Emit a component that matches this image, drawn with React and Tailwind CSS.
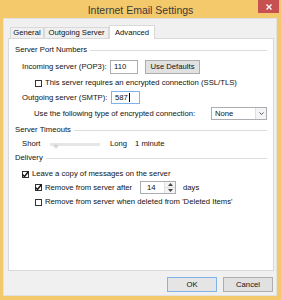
import { useState } from "react";

function Section({ title, className }) {
  return (
    <div className={"flex items-center h-[10px] " + className}>
      <span>{title}</span>
      <div className="flex-1 h-px bg-[#dcdcdc] ml-[3px]" />
    </div>
  );
}

function Check({ checked }) {
  return (
    <span className="w-[7px] h-[7px] border border-[#333] bg-white flex items-center justify-center shrink-0">
      {checked && (
        <svg width="7" height="7" viewBox="0 0 7 7" className="overflow-visible">
          <polyline points="0.5,3.5 2.5,5.5 6.5,0.5" fill="none" stroke="#111" strokeWidth="1.4" />
        </svg>
      )}
    </span>
  );
}

function Tab({ label, active, w }) {
  if (active) {
    return (
      <div className={"h-[14px] -mb-px bg-white border border-b-0 border-[#d9d9d9] flex items-center justify-center z-10 " + w}>
        {label}
      </div>
    );
  }
  return (
    <div className={"h-[11px] mt-[3px] bg-[#f0f0f0] border border-b-0 border-[#d9d9d9] flex items-center justify-center " + w}>
      {label}
    </div>
  );
}

export default function App() {
  const [leave] = useState(true);

  return (
    <div className="w-[281px] h-[300px] bg-[#f3c96c] flex flex-col text-[7.7px] text-[#111] leading-none whitespace-nowrap" style={{ fontFamily: '"Liberation Sans", Arial, sans-serif' }}>
      <div className="h-[18px] grid grid-cols-[1fr_auto_1fr] items-start">
        <div />
        <div className="text-[10.5px] text-[#3a3a3a] mt-[5px]">Internet Email Settings</div>
        <div className="flex justify-end">
          <div className="w-[21px] h-[13px] bg-[#c75050] mr-[2px] flex items-center justify-center">
            <svg width="6" height="6" viewBox="0 0 6 6">
              <path d="M0.5 0.5 L5.5 5.5 M5.5 0.5 L0.5 5.5" stroke="#fff" strokeWidth="1.4" />
            </svg>
          </div>
        </div>
      </div>

      <div className="flex-1 ml-[3px] mr-[4px] mb-[4px] bg-[#f0f0f0] border border-[#e2e2e2] flex flex-col pl-[4px] pr-[2px] pt-[5px]">
        <div className="flex items-end pl-[2px] h-[14px]">
          <Tab label="General" w="w-[34px]" />
          <Tab label="Outgoing Server" w="w-[65px]" />
          <Tab label="Advanced" active w="w-[46px]" />
        </div>
        <div className="h-[233px] bg-white border border-[#d9d9d9] px-[6px] flex flex-col">
          <Section title="Server Port Numbers" className="mt-[6px]" />

          <div className="h-[14px] mt-[5px] flex items-center pl-[7px]">
            <span className="w-[88px] shrink-0">Incoming server (POP3):</span>
            <div className="w-[28px] h-[14px] border border-[#abadb3] bg-white flex items-center pl-[3px]">110</div>
            <div className="w-[55px] h-[14px] ml-[7px] border border-[#adadad] bg-[#e1e1e1] flex items-center justify-center">Use Defaults</div>
          </div>

          <div className="h-[8px] mt-[5px] flex items-center pl-[20px] gap-[3px]">
            <Check />
            <span>This server requires an encrypted connection (SSL/TLS)</span>
          </div>

          <div className="h-[13px] mt-[4px] flex items-center pl-[7px]">
            <span className="w-[89px] shrink-0">Outgoing server (SMTP):</span>
            <div className="w-[29px] h-[13px] border border-[#7eb4ea] bg-white flex items-center pl-[3px]">
              587<span className="w-px h-[9px] bg-black ml-px" />
            </div>
          </div>

          <div className="h-[13px] mt-[3px] flex items-center pl-[19px]">
            <span className="w-[177px] shrink-0">Use the following type of encrypted connection:</span>
            <div className="w-[56px] h-[13px] border border-[#abadb3] bg-white flex items-center">
              <span className="flex-1 pl-[3px]">None</span>
              <div className="w-[11px] h-[11px] border-l border-[#e0e0e0] bg-[#f4f4f4] flex items-center justify-center">
                <svg width="5" height="3" viewBox="0 0 5 3">
                  <polyline points="0.5,0.5 2.5,2.5 4.5,0.5" fill="none" stroke="#555" strokeWidth="1" />
                </svg>
              </div>
            </div>
          </div>

          <Section title="Server Timeouts" className="mt-[5px]" />

          <div className="h-[10px] mt-[4px] flex items-center pl-[7px]">
            <span className="w-[28px]">Short</span>
            <div className="w-[50px] h-[3px] bg-[#e6e6e6] relative">
              <div className="absolute left-[4px] top-[1px] w-[4px] h-[4px] bg-[#d8d8d8] rotate-45" />
            </div>
            <span className="ml-[10px] w-[25px]">Long</span>
            <span>1 minute</span>
          </div>

          <Section title="Delivery" className="mt-[4px]" />

          <div className="h-[8px] mt-[7px] flex items-center pl-[7px] gap-[3px]">
            <Check checked={leave} />
            <span>Leave a copy of messages on the server</span>
          </div>

          <div className="h-[13px] mt-[3px] flex items-center pl-[20px]">
            <Check checked />
            <span className="ml-[3px] w-[95px] shrink-0">Remove from server after</span>
            <div className="w-[36px] h-[13px] border border-[#abadb3] bg-white flex items-center">
              <span className="flex-1 pl-[6px]">14</span>
              <div className="w-[11px] h-full flex flex-col border-l border-[#e0e0e0]">
                <div className="flex-1 flex items-center justify-center bg-[#f4f4f4] border-b border-[#e0e0e0]">
                  <svg width="5" height="3" viewBox="0 0 5 3"><polygon points="0,3 2.5,0 5,3" fill="#444" /></svg>
                </div>
                <div className="flex-1 flex items-center justify-center bg-[#f4f4f4]">
                  <svg width="5" height="3" viewBox="0 0 5 3"><polygon points="0,0 2.5,3 5,0" fill="#444" /></svg>
                </div>
              </div>
            </div>
            <span className="ml-[7px]">days</span>
          </div>

          <div className="h-[8px] mt-[4px] flex items-center pl-[20px] gap-[3px]">
            <Check />
            <span>Remove from server when deleted from 'Deleted Items'</span>
          </div>
        </div>

        <div className="flex justify-end gap-[6px] mt-[6px] pr-[1px]">
          <div className="w-[50px] h-[15px] border border-[#7eb4ea] bg-[#e5e5e5] flex items-center justify-center">OK</div>
          <div className="w-[50px] h-[15px] border border-[#adadad] bg-[#e1e1e1] flex items-center justify-center">Cancel</div>
        </div>
      </div>
    </div>
  );
}
